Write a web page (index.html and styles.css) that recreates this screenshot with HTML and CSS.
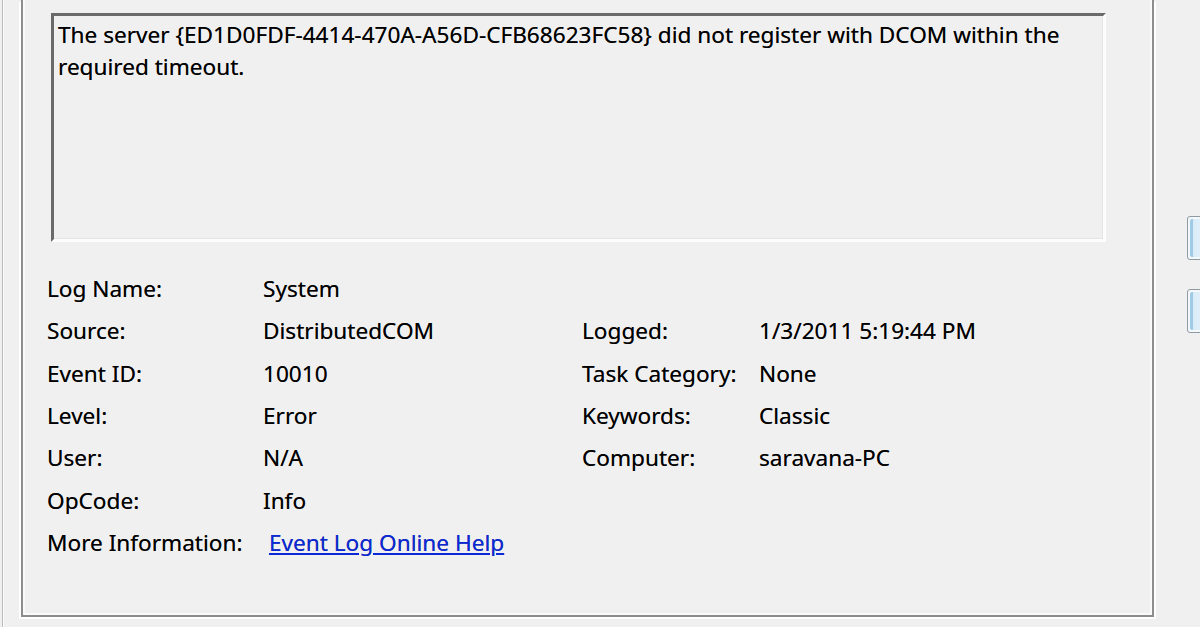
FILE: index.html
```html
<!DOCTYPE html>
<html>
<head>
<meta charset="utf-8">
<link rel="stylesheet" href="styles.css">
</head>
<body>
<div class="page">
  <div class="edge"></div>
  <div class="frame">
    <div class="msgbox">The server {ED1D0FDF-4414-470A-A56D-CFB68623FC58} did not register with DCOM within the required timeout.</div>
    <div class="details">
      <div class="lbl">Log Name:</div><div class="val">System</div><div></div><div></div>
      <div class="lbl">Source:</div><div class="val">DistributedCOM</div><div class="lbl">Logged:</div><div class="val">1/3/2011 5:19:44 PM</div>
      <div class="lbl">Event ID:</div><div class="val">10010</div><div class="lbl">Task Category:</div><div class="val">None</div>
      <div class="lbl">Level:</div><div class="val">Error</div><div class="lbl">Keywords:</div><div class="val">Classic</div>
      <div class="lbl">User:</div><div class="val">N/A</div><div class="lbl">Computer:</div><div class="val">saravana-PC</div>
      <div class="lbl">OpCode:</div><div class="val">Info</div><div></div><div></div>
      <div class="lbl">More Information:</div><div class="val"><a class="link" href="#">Event Log Online Help</a></div><div></div><div></div>
    </div>
  </div>
  <div class="side">
    <div class="btn"><div class="btn-in"></div></div>
    <div class="btn"><div class="btn-in"></div></div>
  </div>
</div>
</body>
</html>
```

FILE: styles.css
```css
html, body {
  margin: 0;
  padding: 0;
  background: #f0f0f0;
}
.page {
  width: 1200px;
  height: 627px;
  overflow: hidden;
  display: flex;
  align-items: flex-start;
  font-family: "Noto Sans", "Open Sans", sans-serif;
  font-size: 22.6px;
  color: #000;
  text-shadow: 0 0 0.6px rgba(0, 0, 0, 0.6);
}
.edge {
  width: 1px;
  height: 627px;
  margin-left: 2px;
  background: #bcbcbc;
  box-shadow: 1px 0 0 #fafafa;
  flex: none;
}
.frame {
  flex: none;
  margin-left: 18px;
  width: 1129px;
  height: 602px;
  border-left: 2px solid #8d8d8d;
  border-right: 2px solid #8d8d8d;
  border-bottom: 2px solid #8d8d8d;
  box-shadow: -2px 2px 0 #ffffff, 2px 2px 0 #ffffff, inset 2px -2px 0 #fafafa, inset -2px 0 0 #fafafa;
  padding: 13px 0 0 0;
  box-sizing: content-box;
}
.msgbox {
  margin-left: 28px;
  width: 1042px;
  height: 220px;
  border-top: 3px solid #6a6a6a;
  border-left: 3px solid #6a6a6a;
  border-right: 3px solid #fdfdfd;
  border-bottom: 3px solid #fdfdfd;
  box-shadow: inset -1px -1px 0 #e4e4e4;
  padding: 3px 3px 0 4px;
  line-height: 32px;
}
.details {
  margin: 26px 0 0 24px;
  display: grid;
  grid-template-columns: 216px 319px 177px 1fr;
  grid-auto-rows: 42.3px;
  align-items: center;
  line-height: 30px;
}
.link {
  color: #0b29d6;
  text-decoration: underline;
  margin-left: 6px;
}
.side {
  flex: 1;
  padding: 216px 0 0 33px;
  display: flex;
  flex-direction: column;
  gap: 29px;
}
.btn {
  width: 30px;
  height: 44px;
  border: 1px solid #8f9aa3;
  border-radius: 3px;
  background: #f4f8fb;
  box-sizing: border-box;
  padding: 2px;
}
.btn-in {
  height: 100%;
  border-left: 3px solid #9fcbe6;
  background: linear-gradient(90deg, #d8ecf8, #eef6fb);
  border-radius: 2px;
}
```
